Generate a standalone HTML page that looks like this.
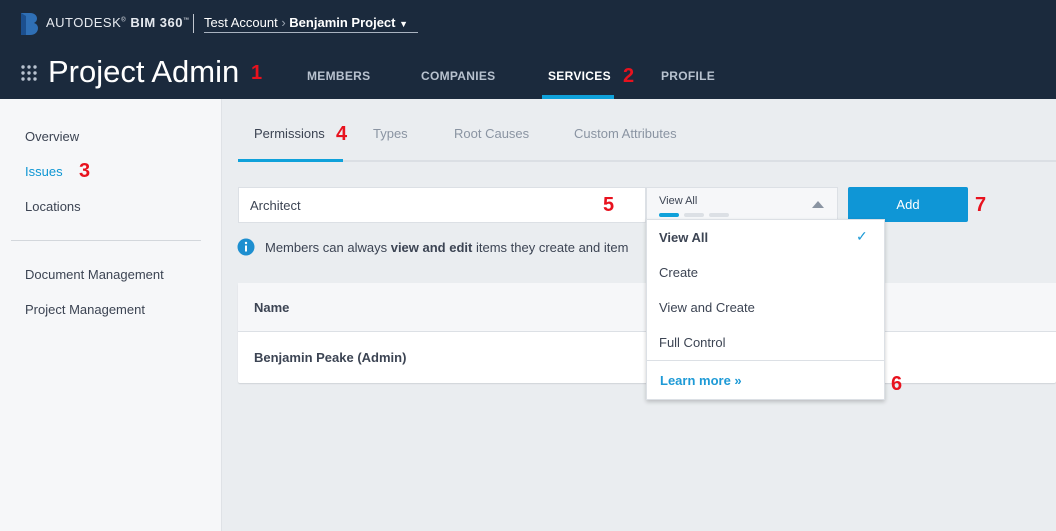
<!DOCTYPE html>
<html><head><meta charset="utf-8"><style>
*{box-sizing:border-box;margin:0;padding:0}
body{width:1056px;height:531px;overflow:hidden;font-family:"Liberation Sans",sans-serif;background:#eaedf0;position:relative;color:#3c4453}
.a{position:absolute;white-space:nowrap}
.hdr{position:absolute;left:0;top:0;width:1056px;height:99px;background:#1b2a3d}
.red{color:#e8121e;font-weight:bold;font-size:20px}
.side{position:absolute;left:0;top:99px;width:222px;height:432px;background:#f6f7f9;border-right:1px solid #dfe2e6}
.side div{position:absolute;left:25px;font-size:13px;color:#3c4453}
.nav{font-size:12px;font-weight:bold;color:#b8c2cf;letter-spacing:.3px;top:69px}
.tab{font-size:13px;color:#8a94a2;top:126px}
</style></head><body>
<div class="hdr">
 <svg class="a" style="left:20px;top:12px" width="18" height="24" viewBox="0 0 18 24"><path d="M1 1h9c5 0 7 3 7 5.5 0 2-1 3.5-3 4.5 2.5.8 4 2.6 4 5 0 4-3 7-8 7H1z" fill="#2f6fb5"/><path d="M1 1l5 3v19H1z" fill="#1c4f8e"/></svg>
 <div class="a" style="left:46px;top:15px;font-size:13px;color:#e6eaf0;letter-spacing:.5px">AUTODESK<sup style="font-size:6px">®</sup> <b>BIM 360</b><sup style="font-size:6px">™</sup></div>
 <div class="a" style="left:193px;top:14px;width:1px;height:19px;background:#c0c6cf"></div>
 <div class="a" style="left:204px;top:15px;font-size:13px;color:#fff;border-bottom:1px solid #a9b3c0;padding-bottom:2px;width:214px">Test Account <span style="color:#9aa4b1">›</span> <b>Benjamin Project</b> <span style="font-size:9px">▼</span></div>
 <svg class="a" style="left:21px;top:65px" width="16" height="16"><g fill="#b8c2cf"><circle cx="2" cy="2" r="1.7"/><circle cx="8" cy="2" r="1.7"/><circle cx="14" cy="2" r="1.7"/><circle cx="2" cy="8" r="1.7"/><circle cx="8" cy="8" r="1.7"/><circle cx="14" cy="8" r="1.7"/><circle cx="2" cy="14" r="1.7"/><circle cx="8" cy="14" r="1.7"/><circle cx="14" cy="14" r="1.7"/></g></svg>
 <div class="a" style="left:48px;top:54px;font-size:31px;letter-spacing:0;color:#fff">Project Admin</div>
 <div class="a red" style="left:251px;top:62px">1</div>
 <div class="a nav" style="left:307px">MEMBERS</div>
 <div class="a nav" style="left:421px">COMPANIES</div>
 <div class="a nav" style="left:548px;color:#fff">SERVICES</div>
 <div class="a" style="left:542px;top:95px;width:72px;height:4px;background:#0fa1da"></div>
 <div class="a red" style="left:623px;top:65px">2</div>
 <div class="a nav" style="left:661px">PROFILE</div>
</div>
<div class="side">
 <div style="top:30px">Overview</div>
 <div style="top:65px;color:#0e96d3">Issues</div>
 <div class="red" style="left:79px;top:61px;color:#e8121e;font-size:20px">3</div>
 <div style="top:100px">Locations</div>
 <div style="left:11px;top:141px;width:190px;height:1px;background:#d3d7dc"></div>
 <div style="top:168px">Document Management</div>
 <div style="top:203px">Project Management</div>
</div>
<div class="a" style="left:238px;top:160px;width:818px;height:2px;background:#dbdfe4"></div>
<div class="a tab" style="left:254px;color:#3c4453">Permissions</div>
<div class="a" style="left:238px;top:159px;width:105px;height:3px;background:#0fa1da"></div>
<div class="a red" style="left:336px;top:123px">4</div>
<div class="a tab" style="left:373px">Types</div>
<div class="a tab" style="left:454px">Root Causes</div>
<div class="a tab" style="left:574px">Custom Attributes</div>
<div class="a" style="left:238px;top:187px;width:408px;height:36px;background:#fff;border:1px solid #dce0e5;font-size:13px;padding:10px 0 0 11px">Architect</div>
<div class="a red" style="left:603px;top:194px">5</div>
<div class="a" style="left:646px;top:187px;width:192px;height:36px;background:#f6f7f9;border:1px solid #dce0e5"></div>
<div class="a" style="left:659px;top:195px;font-size:11px">View All</div>
<div class="a" style="left:659px;top:213px;width:20px;height:4px;border-radius:2px;background:#0fa1da"></div>
<div class="a" style="left:684px;top:213px;width:20px;height:4px;border-radius:2px;background:#dce0e5"></div>
<div class="a" style="left:709px;top:213px;width:20px;height:4px;border-radius:2px;background:#dce0e5"></div>
<div class="a" style="left:812px;top:201px;width:0;height:0;border-left:6px solid transparent;border-right:6px solid transparent;border-bottom:7px solid #8a94a2"></div>
<div class="a" style="left:848px;top:187px;width:120px;height:35px;background:#0f96d6;border-radius:2px;color:#fff;font-size:13px;text-align:center;line-height:35px">Add</div>
<div class="a red" style="left:975px;top:194px">7</div>
<svg class="a" style="left:237px;top:238px" width="18" height="18"><circle cx="9" cy="9" r="8.5" fill="#1e8fd0"/><rect x="8" y="7.5" width="2" height="6" fill="#fff"/><circle cx="9" cy="5" r="1.2" fill="#fff"/></svg>
<div class="a" style="left:265px;top:240px;font-size:13px">Members can always <b>view and edit</b> items they create and item</div>
<div class="a" style="left:238px;top:283px;width:818px;height:100px;background:#fff;border-radius:2px;box-shadow:0 1px 1px #d0d4d9"></div>
<div class="a" style="left:238px;top:283px;width:818px;height:49px;background:#f6f7f9;border-bottom:1px solid #dce0e5"></div>
<div class="a" style="left:254px;top:300px;font-size:13px;font-weight:bold">Name</div>
<div class="a" style="left:254px;top:350px;font-size:13px;font-weight:bold">Benjamin Peake (Admin)</div>
<div class="a" style="left:646px;top:219px;width:239px;height:181px;background:#fff;border:1px solid #dce0e5;box-shadow:0 2px 4px rgba(0,0,0,.2)"></div>
<div class="a" style="left:659px;top:230px;font-size:13px;font-weight:bold">View All</div>
<div class="a" style="left:856px;top:228px;color:#1e9ad6;font-size:14px">✓</div>
<div class="a" style="left:659px;top:265px;font-size:13px">Create</div>
<div class="a" style="left:659px;top:300px;font-size:13px">View and Create</div>
<div class="a" style="left:659px;top:335px;font-size:13px">Full Control</div>
<div class="a" style="left:647px;top:360px;width:237px;height:1px;background:#dce0e5"></div>
<div class="a" style="left:660px;top:373px;font-size:13px;font-weight:bold;color:#1e9ad6">Learn more »</div>
<div class="a red" style="left:891px;top:373px">6</div>
</body></html>
